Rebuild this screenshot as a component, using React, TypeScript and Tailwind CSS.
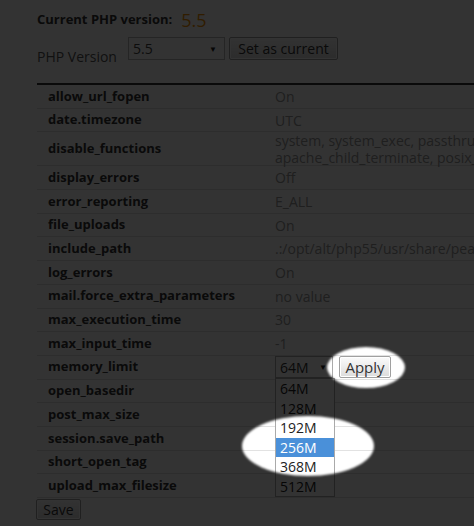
import React from 'react';

type Row = { name: string; value?: string; lines?: string[]; memory?: boolean };

const rows: Row[] = [
  { name: 'allow_url_fopen', value: 'On' },
  { name: 'date.timezone', value: 'UTC' },
  {
    name: 'disable_functions',
    lines: [
      'system, system_exec, passthru, exec, shell_exec, popen, proc_open, pcntl_exec,',
      'apache_child_terminate, posix_kill, posix_mkfifo, posix_setpgid, posix_setsid',
    ],
  },
  { name: 'display_errors', value: 'Off' },
  { name: 'error_reporting', value: 'E_ALL' },
  { name: 'file_uploads', value: 'On' },
  { name: 'include_path', value: '.:/opt/alt/php55/usr/share/pear:/opt/alt/php55/usr/share/php' },
  { name: 'log_errors', value: 'On' },
  { name: 'mail.force_extra_parameters', value: 'no value' },
  { name: 'max_execution_time', value: '30' },
  { name: 'max_input_time', value: '-1' },
  { name: 'memory_limit', memory: true },
  { name: 'open_basedir', value: '' },
  { name: 'post_max_size', value: '' },
  { name: 'session.save_path', value: '' },
  { name: 'short_open_tag', value: '' },
  { name: 'upload_max_filesize', value: '' },
];

const sizes = ['64M', '128M', '192M', '256M', '368M', '512M'];

const btn =
  'border border-[#a0a0a0] rounded-[2px] bg-gradient-to-b from-[#fbfbfb] to-[#dcdcdc] shadow-[inset_0_0_0_1px_#ffffff] text-[#333] text-[14px] leading-none flex items-center justify-center';

function MemorySelect() {
  return (
    <div className="flex items-center">
      <div className="relative">
        <div className="w-[58px] h-[22px] border border-[#aaa] bg-white flex items-center justify-between pl-[4px] pr-[5px] text-[14px] text-[#333]">
          <span>64M</span>
          <span className="text-[8px] text-[#222]">▼</span>
        </div>
        <ul className="absolute left-0 top-[22px] z-10 w-[60px] border border-[#aaa] bg-white">
          {sizes.map((s) => (
            <li
              key={s}
              className={`h-[19.5px] pl-[4px] flex items-center text-[14px] ${
                s === '256M' ? 'bg-[#4a90d9] text-white' : 'text-[#222]'
              }`}
            >
              {s}
            </li>
          ))}
        </ul>
      </div>
      <button className={`${btn} ml-[6px] w-[52px] h-[22px] text-[15px]`}>Apply</button>
    </div>
  );
}

export default function App() {
  return (
    <div className="relative w-[474px] h-[526px] overflow-hidden bg-white font-['Open_Sans',sans-serif]">
      <div className="pl-[37px] pt-[8px]">
        <div className="h-[24px] flex items-center whitespace-nowrap">
          <span className="text-[13px] font-bold text-[#333]">Current PHP version:</span>
          <span className="ml-[9px] text-[18px] text-[#f29100]">5.5</span>
        </div>

        <div className="mt-[5px] flex items-start h-[29px]">
          <span className="mt-[11px] w-[91px] text-[14px] leading-[18px] text-[#555]">PHP Version</span>
          <div className="w-[97px] h-[23px] border border-[#bbb] bg-white flex items-center justify-between pl-[4px] pr-[7px] text-[14px] text-[#444]">
            <span>5.5</span>
            <span className="text-[8px] text-[#222]">▼</span>
          </div>
          <button className={`${btn} ml-[4px] w-[109px] h-[23px]`}>Set as current</button>
        </div>

        <div className="mt-[17px] w-[560px] border-t-2 border-[#333]">
          {rows.map((r) => (
            <div
              key={r.name}
              className={`flex items-center border-b border-[#e2e2e2] ${r.lines ? 'h-[34px]' : 'h-[23.7px]'}`}
            >
              <div className="w-[238px] shrink-0 pl-[11px] text-[13px] font-bold text-[#333] whitespace-nowrap">
                {r.name}
              </div>
              <div className="text-[14px] text-[#999] whitespace-nowrap">
                {r.memory ? (
                  <MemorySelect />
                ) : r.lines ? (
                  r.lines.map((l) => (
                    <div key={l} className="leading-[17px]">
                      {l}
                    </div>
                  ))
                ) : (
                  r.value
                )}
              </div>
            </div>
          ))}
        </div>

        <button className={`${btn} mt-[1px] -ml-[1px] w-[45px] h-[21px]`}>Save</button>
      </div>

      <svg className="absolute inset-0 pointer-events-none z-20" width="474" height="526">
        <defs>
          <filter id="soft" x="-20%" y="-20%" width="140%" height="140%">
            <feGaussianBlur stdDeviation="1.2" />
          </filter>
          <mask id="spot" maskUnits="userSpaceOnUse" x="0" y="0" width="474" height="526">
            <rect width="474" height="526" fill="white" />
            <g filter="url(#soft)">
              <ellipse cx="366" cy="367.5" rx="39" ry="20.5" fill="black" />
              <ellipse cx="308" cy="446" rx="66" ry="30" fill="black" />
            </g>
          </mask>
        </defs>
        <rect width="474" height="526" fill="rgba(0,0,0,0.8)" mask="url(#spot)" />
      </svg>
    </div>
  );
}
